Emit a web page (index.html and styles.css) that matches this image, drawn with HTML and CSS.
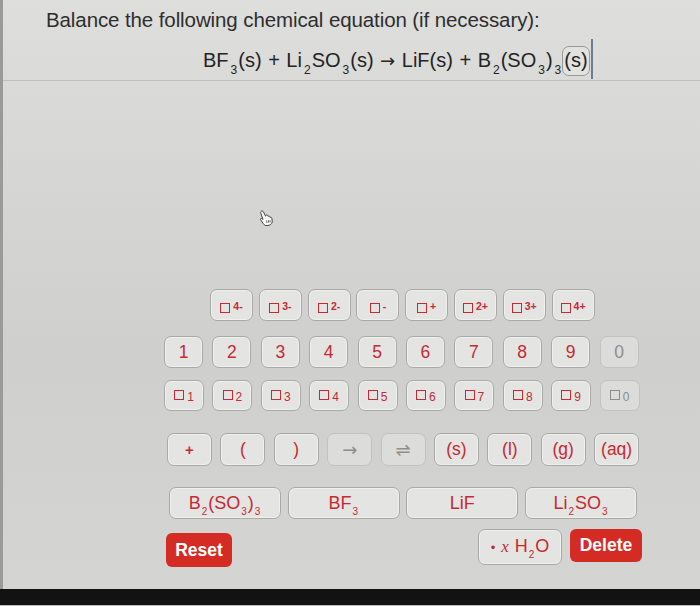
FILE: index.html
```html
<!DOCTYPE html>
<html>
<head>
<meta charset="utf-8">
<link rel="stylesheet" href="styles.css">
</head>
<body>
<div class="screen">
  <div class="header">
    <h1 class="title">Balance the following chemical equation (if necessary):</h1>
    <div class="equation">BF<sub>3</sub>(s) + Li<sub>2</sub>SO<sub>3</sub>(s) <span class="arr">→</span> LiF(s) + B<sub>2</sub>(SO<sub>3</sub>)<sub>3</sub><span class="sel">(s)</span><span class="caret"></span></div>
  </div>
  <div class="work">
    <svg class="hand" width="16" height="18" viewBox="0 0 16 18">
      <path d="M3 2.5 C3.8 1.6 5 2 5.4 2.8 L7.6 7.2 L7.8 6.4 C8.3 5.7 9.4 5.8 9.7 6.6 L10 7.4 C10.5 6.8 11.6 7 11.9 7.8 L12.1 8.5 C12.6 8 13.6 8.3 13.8 9.1 L14.2 11.5 C14.5 13.8 13.4 15.6 11.2 16.2 L9 16.6 C7.3 16.8 6.2 16 5.3 14.7 L2.6 10.8 C2.1 10 2.7 9.2 3.5 9.4 L5 10.4 L2.8 4.3 C2.6 3.6 2.6 3 3 2.5 Z" fill="#fafafa" stroke="#444" stroke-width="1" stroke-linejoin="round"/>
      <path d="M8.6 11.5 L8.9 14 M10.4 11.2 L10.7 13.7 M12 11.1 L12.2 13.3" stroke="#444" stroke-width="0.8" fill="none"/>
    </svg>
    <div class="keypad">
      <div class="row r1">
        <button class="key ks"><span class="box"></span><sup>4-</sup></button>
        <button class="key ks"><span class="box"></span><sup>3-</sup></button>
        <button class="key ks"><span class="box"></span><sup>2-</sup></button>
        <button class="key ks"><span class="box"></span><sup>-</sup></button>
        <button class="key ks"><span class="box"></span><sup>+</sup></button>
        <button class="key ks"><span class="box"></span><sup>2+</sup></button>
        <button class="key ks"><span class="box"></span><sup>3+</sup></button>
        <button class="key ks"><span class="box"></span><sup>4+</sup></button>
      </div>
      <div class="row r2">
        <button class="key kn">1</button>
        <button class="key kn">2</button>
        <button class="key kn">3</button>
        <button class="key kn">4</button>
        <button class="key kn">5</button>
        <button class="key kn">6</button>
        <button class="key kn">7</button>
        <button class="key kn">8</button>
        <button class="key kn">9</button>
        <button class="key kn off">0</button>
      </div>
      <div class="row r3">
        <button class="key kb"><span class="box"></span><sub>1</sub></button>
        <button class="key kb"><span class="box"></span><sub>2</sub></button>
        <button class="key kb"><span class="box"></span><sub>3</sub></button>
        <button class="key kb"><span class="box"></span><sub>4</sub></button>
        <button class="key kb"><span class="box"></span><sub>5</sub></button>
        <button class="key kb"><span class="box"></span><sub>6</sub></button>
        <button class="key kb"><span class="box"></span><sub>7</sub></button>
        <button class="key kb"><span class="box"></span><sub>8</sub></button>
        <button class="key kb"><span class="box"></span><sub>9</sub></button>
        <button class="key kb off"><span class="box"></span><sub>0</sub></button>
      </div>
      <div class="row r4">
        <button class="key kp plus">+</button>
        <button class="key kp">(</button>
        <button class="key kp">)</button>
        <button class="key kp off arrow">→</button>
        <button class="key kp off arrow">⇌</button>
        <button class="key kp">(s)</button>
        <button class="key kp">(l)</button>
        <button class="key kp">(g)</button>
        <button class="key kp">(aq)</button>
      </div>
      <div class="row r5">
        <button class="key kc"><span class="lbl">B<sub>2</sub>(SO<sub>3</sub>)<sub>3</sub></span></button>
        <button class="key kc"><span class="lbl">BF<sub>3</sub></span></button>
        <button class="key kc"><span class="lbl">LiF</span></button>
        <button class="key kc"><span class="lbl">Li<sub>2</sub>SO<sub>3</sub></span></button>
      </div>
      <div class="row r6">
        <button class="red reset">Reset</button>
        <button class="key water"><span class="lbl"><span class="dot">•</span><i class="x">x</i>H<sub>2</sub>O</span></button>
        <button class="red delete">Delete</button>
      </div>
    </div>
  </div>
</div>
<div class="bezel"></div>
</body>
</html>
```
FILE: styles.css
```css
html, body {
  margin: 0;
  padding: 0;
}
body {
  width: 700px;
  height: 606px;
  overflow: hidden;
  background: #d4d4d2;
  font-family: "Liberation Sans", Arial, sans-serif;
}
.screen {
  height: 589px;
  box-sizing: border-box;
  border-left: 3px solid #9a9a98;
  background: linear-gradient(180deg, #dededc 0%, #d6d6d4 30%, #cfcfcd 60%, #d4d4d2 100%);
  display: flex;
  flex-direction: column;
}
.bezel {
  height: 16px;
  background: #121212;
  border-bottom: 1px solid #bdbdbd;
}
.header {
  height: 81px;
  box-sizing: border-box;
  border-bottom: 1px solid #bfbfbd;
}
.title {
  margin: 0;
  padding: 8px 0 0 43px;
  font-size: 20.5px;
  line-height: 24px;
  font-weight: normal;
  color: #2e2e2e;
  letter-spacing: -0.1px;
}
.equation {
  margin: 7px 0 0 200px;
  font-size: 20px;
  line-height: 28px;
  color: #242424;
  white-space: pre;
  word-spacing: 1px;
}
.equation sub {
  font-size: 12px;
  vertical-align: -7px;
  line-height: 0;
  margin: 0 1px 0 2px;
}
.arr {
  font-family: "DejaVu Sans", sans-serif;
  font-size: 18px;
}
.sel {
  display: inline-block;
  border: 1px solid #9a9a9a;
  border-radius: 7px;
  padding: 2px 1px 4px;
  line-height: 22px;
  background: #e2e2e0;
}
.caret {
  display: inline-block;
  width: 2px;
  height: 40px;
  background: #6e7c92;
  vertical-align: -12px;
  margin-left: 1px;
}
.work {
  flex: 1;
  position: relative;
}
.hand {
  position: absolute;
  left: 255px;
  top: 128px;
}
.keypad {
  padding: 208px 0 0 161px;
  display: flex;
  flex-direction: column;
}
.row {
  display: flex;
  align-items: flex-start;
}
.key {
  box-sizing: border-box;
  border: 1px solid #a9a9a7;
  border-radius: 7px;
  background: #e4e4e2;
  color: #c52a33;
  font-family: "Liberation Sans", Arial, sans-serif;
  padding: 0;
  display: flex;
  align-items: center;
  justify-content: center;
  box-shadow: inset 0 0 0 1px #efefed;
}
.key.off {
  color: #8d8d8b;
  border-color: #c2c2c0;
  background: #dcdcda;
  box-shadow: none;
}
.box {
  display: inline-block;
  width: 10px;
  height: 10px;
  border: 1.3px solid currentColor;
  box-sizing: border-box;
}
.r1 {
  margin-left: 46px;
  gap: 5.8px;
}
.ks {
  width: 43px;
  height: 32px;
  padding-top: 5px;
}
.ks sup {
  font-size: 10.5px;
  font-weight: bold;
  margin-left: 3px;
  align-self: flex-start;
  margin-top: 6px;
  line-height: 1;
}
.r2 {
  margin-top: 15px;
  gap: 9.4px;
}
.kn {
  width: 39px;
  height: 32px;
  font-size: 17.5px;
}
.r3 {
  margin-top: 12px;
  gap: 8.4px;
}
.kb {
  width: 40px;
  height: 31px;
  padding-bottom: 2px;
}
.kb sub {
  font-size: 12px;
  margin-left: 3px;
  align-self: flex-end;
  margin-bottom: 5px;
  line-height: 1;
}
.r4 {
  margin-top: 22px;
  margin-left: 3px;
  gap: 8.4px;
}
.kp {
  width: 45px;
  height: 33px;
  font-size: 17.5px;
}
.kp.plus {
  font-size: 15px;
  font-weight: bold;
}
.kp.arrow {
  font-family: "DejaVu Sans", sans-serif;
  font-size: 18px;
}
.r5 {
  margin-top: 21px;
  margin-left: 5px;
  gap: 6.7px;
}
.kc {
  width: 112px;
  height: 32px;
  font-size: 18px;
}
.lbl {
  display: inline-block;
  line-height: 20px;
  white-space: nowrap;
}
.lbl sub {
  font-size: 10px;
  vertical-align: -6px;
  line-height: 0;
  margin: 0 1px;
}
.r6 {
  margin-top: 10px;
  margin-left: 2px;
}
.red {
  border: none;
  border-radius: 6px;
  background: #d42c25;
  color: #ffffff;
  font-family: "Liberation Sans", Arial, sans-serif;
  font-weight: bold;
  font-size: 17.5px;
  padding: 0;
}
.reset {
  width: 66px;
  height: 34px;
  margin-top: 4px;
}
.water {
  width: 84px;
  height: 36px;
  margin-left: 246px;
  font-size: 18px;
}
.water .dot {
  font-size: 13px;
  margin-right: 6px;
}
.water .x {
  font-family: "Liberation Serif", serif;
  font-style: italic;
  font-size: 17px;
  margin-right: 6px;
}
.delete {
  width: 72px;
  height: 33px;
  margin-left: 8px;
}
```
